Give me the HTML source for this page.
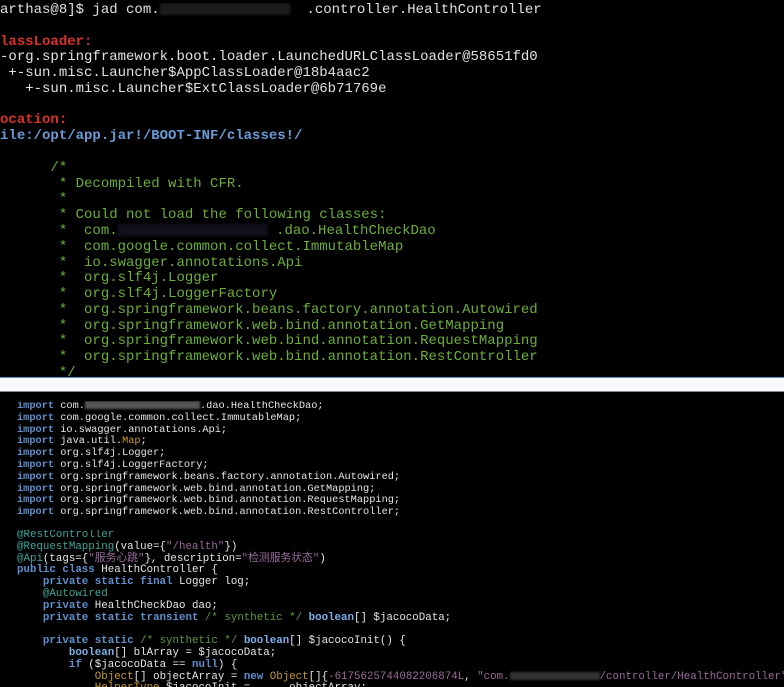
<!DOCTYPE html>
<html><head><meta charset="utf-8"><style>
html,body{margin:0;padding:0;width:784px;height:687px;overflow:hidden;background:#000;position:relative}
pre{margin:0;position:absolute;font-family:"Liberation Mono","Noto Sans CJK SC",monospace;white-space:pre;overflow:hidden}
#top{left:-8.4px;top:3px;font-size:14px;line-height:15.78px;color:#e2e2e2;width:792px;height:374px}
.r{color:#d8322c;font-weight:bold}
.b{color:#6b9bd6;font-weight:bold}
.g{color:#6cae3a}
.blur{display:inline-block;background:#1c1c1c;height:12px;vertical-align:middle;filter:blur(1px)}
#band{position:absolute;left:0;top:377px;width:784px;height:15px;background:#f7f9fc;border-top:1px solid #5b8fd0;box-sizing:border-box;border-bottom:1px solid #888}
#imp{left:17px;top:401px;font-size:10.3px;line-height:11.8px;color:#e6e6e6;}
#code{left:17px;top:530px;font-size:10.8px;line-height:11.8px;color:#e6e6e6;width:767px;height:157px}
.k{color:#5e91cc;font-weight:bold}
.a{color:#3fa59a}
.s{color:#9a6a9a}
.y{color:#c89a2a}
.c{color:#5d9a3a}
</style></head><body>
<pre id="top">[arthas@8]$ jad com.<span class="blur" style="width:130px"></span>  .controller.HealthController

<span class="r">ClassLoader:</span>
`-org.springframework.boot.loader.LaunchedURLClassLoader@58651fd0
  +-sun.misc.Launcher$AppClassLoader@18b4aac2
    +-sun.misc.Launcher$ExtClassLoader@6b71769e

<span class="r">Location:</span>
<span class="b">file:/opt/app.jar!/BOOT-INF/classes!/</span>

<span class="g">       /*
        * Decompiled with CFR.
        *
        * Could not load the following classes:
        *  com.<span class="blur" style="width:150px;background:#10101c"></span> .dao.HealthCheckDao
        *  com.google.common.collect.ImmutableMap
        *  io.swagger.annotations.Api
        *  org.slf4j.Logger
        *  org.slf4j.LoggerFactory
        *  org.springframework.beans.factory.annotation.Autowired
        *  org.springframework.web.bind.annotation.GetMapping
        *  org.springframework.web.bind.annotation.RequestMapping
        *  org.springframework.web.bind.annotation.RestController
        */</span></pre>
<div id="band"></div>
<pre id="imp"><span class="k">import</span> com.<span class="blur" style="width:115px;height:8px;background:#555"></span>.dao.HealthCheckDao;
<span class="k">import</span> com.google.common.collect.ImmutableMap;
<span class="k">import</span> io.swagger.annotations.Api;
<span class="k">import</span> java.util.<span class="y">Map</span>;
<span class="k">import</span> org.slf4j.Logger;
<span class="k">import</span> org.slf4j.LoggerFactory;
<span class="k">import</span> org.springframework.beans.factory.annotation.Autowired;
<span class="k">import</span> org.springframework.web.bind.annotation.GetMapping;
<span class="k">import</span> org.springframework.web.bind.annotation.RequestMapping;
<span class="k">import</span> org.springframework.web.bind.annotation.RestController;</pre>
<pre id="code"><span class="a">@RestController</span>
<span class="a">@RequestMapping</span>(value={<span class="s">"/health"</span>})
<span class="a">@Api</span>(tags={<span class="s">"服务心跳"</span>}, description=<span class="s">"检测服务状态"</span>)
<span class="k">public class</span> HealthController {
    <span class="k">private static final</span> Logger log;
    <span class="a">@Autowired</span>
    <span class="k">private</span> HealthCheckDao dao;
    <span class="k">private static transient</span> <span class="c">/* synthetic */</span> <span class="k" style="color:#7fb0e8">boolean</span>[] $jacocoData;

    <span class="k">private static</span> <span class="c">/* synthetic */</span> <span class="k" style="color:#7fb0e8">boolean</span>[] $jacocoInit() {
        <span class="k" style="color:#7fb0e8">boolean</span>[] blArray = $jacocoData;
        <span class="k">if</span> ($jacocoData == <span class="k">null</span>) {
            <span class="y">Object</span>[] objectArray = <span class="k">new</span> <span class="y">Object</span>[]{<span class="s">-6175625744082206874L</span>, <span class="s">"com.<span class="blur" style="width:90px;height:8px;background:#333"></span>/controller/HealthController"</span>, 
            <span class="y">HelperType</span> $jacocoInit = ...  objectArray;</pre>
</body></html>
